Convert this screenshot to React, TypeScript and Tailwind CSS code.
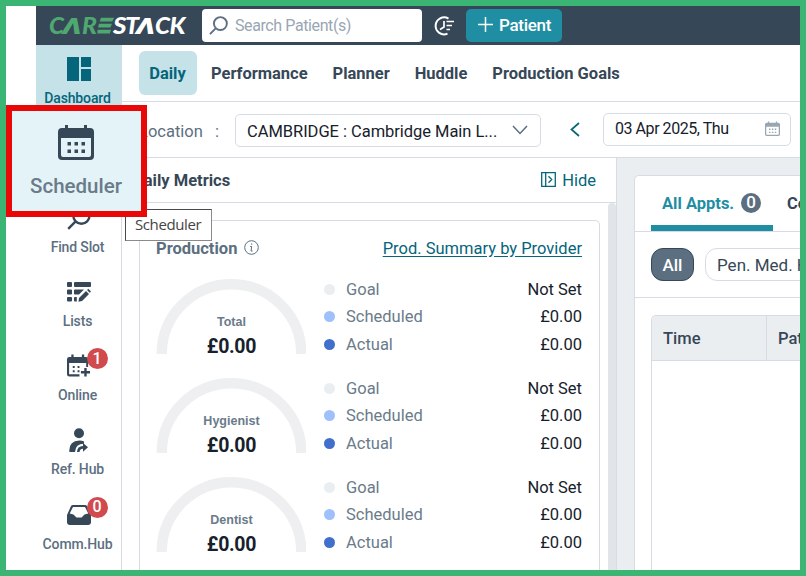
import React from 'react';
import { clsx } from 'clsx';

const TABS = ['Performance', 'Planner', 'Huddle', 'Production Goals'];

const GAUGES = ['Total', 'Hygienist', 'Dentist'];

const LEGEND = [
  { label: 'Goal', value: 'Not Set', dot: 'bg-[#eaeef1]', row: 'h-[27px]' },
  { label: 'Scheduled', value: '£0.00', dot: 'bg-[#a0c0fc]', row: 'h-[27px]' },
  { label: 'Actual', value: '£0.00', dot: 'bg-[#4070cc]', row: 'h-[29px]' },
];

const Logo = () => (
  <svg width="144" height="36" viewBox="-3 -9 144 36" className="shrink-0" fontFamily="Lato, sans-serif" fontWeight="900" fontStyle="italic" fontSize="22">
    <g fill="#4fa870">
      <text x="0" y="16.500" textLength="15" lengthAdjust="spacingAndGlyphs">C</text>
      <text x="13.500" y="16.500" fontFamily="Roboto, sans-serif" textLength="19" lengthAdjust="spacingAndGlyphs">Λ</text>
      <text x="33" y="16.500" textLength="15" lengthAdjust="spacingAndGlyphs">R</text>
      <path d="M52 .8h13.200l-2 3.800H50.600zM50 6.800h13l-1.600 3.600H49zM48.500 12.800h13.500l-1.200 3.700H48.300z" />
    </g>
    <g fill="#ffffff">
      <text x="64" y="16.500" textLength="13.500" lengthAdjust="spacingAndGlyphs">S</text>
      <text x="76" y="16.500" textLength="14" lengthAdjust="spacingAndGlyphs">T</text>
      <text x="87" y="16.500" fontFamily="Roboto, sans-serif" textLength="19" lengthAdjust="spacingAndGlyphs">Λ</text>
      <text x="106" y="16.500" textLength="15" lengthAdjust="spacingAndGlyphs">C</text>
      <text x="120.500" y="16.500" textLength="16" lengthAdjust="spacingAndGlyphs">K</text>
    </g>
  </svg>
);

const SearchIcon = ({ size, className }: { size: number; className?: string }) => (
  <svg width={size} height={size} viewBox="0 0 20 20" fill="none" stroke="currentColor" strokeWidth="2" className={className}>
    <circle cx="12" cy="8" r="6.8" />
    <path d="M7 13l-6 6" />
  </svg>
);

const CalendarIcon = ({ size, className }: { size: number; className?: string }) => (
  <svg width={size} height={size} viewBox="0 0 36 36" className={className}>
    <path
      fill="currentColor"
      fillRule="evenodd"
      d="M7 1h3v3h16V1h3v3h3q4 0 4 4v24q0 4-4 4H4q-4 0-4-4V8q0-4 4-4h3zM3 14v17q0 2 2 2h26q2 0 2-2V14z"
    />
    <path fill="currentColor" d="M9.500 18H13v3.500H9.500zm7 0H20v3.500h-3.500zm7 0H27v3.500h-3.500zM9.500 25.500H13V29H9.500zm7 0H20V29h-3.500zm7 0H27V29h-3.500z" />
  </svg>
);

const DashboardIcon = () => (
  <svg width="24" height="24" viewBox="0 0 24 24" fill="#04657b">
    <path d="M0 0h12v24H0zM14 0h10v10H14zM14 12h10v12H14z" />
  </svg>
);

const ListsIcon = () => (
  <svg width="24" height="20" viewBox="0 0 24 20" fill="currentColor">
    <path d="M1 0h3q1 0 1 1v3q0 1-1 1H1Q0 5 0 4V1q0-1 1-1zM8 0h15q1 0 1 1v3q0 1-1 1H8Q7 5 7 4V1q0-1 1-1zM1 7.500h3q1 0 1 1v3q0 1-1 1H1q-1 0-1-1v-3q0-1 1-1zM8 7.500h9l-5 5H8q-1 0-1-1v-3q0-1 1-1zM1 15h3q1 0 1 1v2.500q0 1-1 1H1q-1 0-1-1V16q0-1 1-1zM8 15h1.800v4.500H8q-1 0-1-1V16q0-1 1-1z" />
    <path d="M12 16l7-7 3 3-7 7-3.500.8zM20 8l1.300-1.200L24 9.500l-1.300 1.300z" />
  </svg>
);

const OnlineIcon = () => (
  <svg width="25" height="24" viewBox="0 0 25 24" fill="currentColor">
    <path d="M4.500 0h2.400v2.500h8.600V0h2.400v2.500H20q2 0 2 2V13h-2V9H2.200v11.500H13V23H2.500Q0 23 0 20.500V5q0-2.500 2.500-2.500h2z" />
    <path d="M6 12h2v2H6zM11 12h2v2h-2zM6 16.500h2v2H6zM11 16.500h2v2h-2zM18 14h2.500v3.200H24v2.500h-3.500V23H18v-3.300h-3.500v-2.500H18z" />
  </svg>
);

const ReferralIcon = () => (
  <svg width="20" height="25" viewBox="0 0 20 25" fill="currentColor">
    <circle cx="10" cy="5.300" r="5" />
    <path d="M1 24q-.8 0-.8-1Q.2 12.500 10.500 12.500q2.500 0 4.500 1v2.300q-8.500 0-9 8.200z" />
    <path d="M8 24q.2-6 6-6.100V15l5 4.300-5 4.400v-3q-3 0-3.500 3.300z" />
  </svg>
);

const InboxIcon = () => (
  <svg width="24" height="20" viewBox="0 0 24 20">
    <path
      fill="currentColor"
      fillRule="evenodd"
      d="M6 0h12q1.500 0 2.100 1.300L24 10v7q0 3-3 3H3q-3 0-3-3v-7l3.900-8.700Q4.500 0 6 0zM6 2L2.700 8.500l3.800 1 3 3h5l3-3 3.800-1L18 2z"
    />
  </svg>
);

const NAV_ITEMS = [
  { label: 'Dashboard', icon: <DashboardIcon />, active: true },
  { label: '', icon: null },
  { label: 'Find Slot', icon: <SearchIcon size={24} /> },
  { label: 'Lists', icon: <ListsIcon /> },
  { label: 'Online', icon: <OnlineIcon />, badge: '1' },
  { label: 'Ref. Hub', icon: <ReferralIcon /> },
  { label: 'Comm.Hub', icon: <InboxIcon />, badge: '0' },
];

const Header = () => (
  <header className="flex h-[39px] shrink-0 items-center bg-[#364757] pl-[10px]">
    <Logo />
    <div className="ml-3 flex h-[33px] w-[220px] items-center rounded bg-white pl-[7px] text-[#5c6f80]">
      <SearchIcon size={19} />
      <span className="ml-[7px] text-[16px] tracking-[-0.4px] text-[#98a6b3]">Search Patient(s)</span>
    </div>
    <svg width="20" height="20" viewBox="0 0 20 20" fill="none" stroke="#fff" strokeWidth="2" className="ml-3">
      <path d="M14.500 2.600A8.500 8.500 0 1 0 13.500 17.700" />
      <path d="M10 5v6l-4 2.500" strokeWidth="1.700" />
      <path d="M12.500 5.500H20M12.500 9.500H18M12.500 13.500H16" strokeWidth="1.700" />
    </svg>
    <button className="ml-3 flex h-[33px] w-[96px] items-center rounded-[5px] bg-[#1f8ea3] pl-3 text-white">
      <svg width="15" height="15" viewBox="0 0 15 15" stroke="currentColor" strokeWidth="1.500" className="-mt-[2px]">
        <path d="M7.500 0v15M0 7.500h15" />
      </svg>
      <span className="ml-[6px] text-[17px] font-medium tracking-[-0.3px]">Patient</span>
    </button>
  </header>
);

const Sidebar = () => (
  <nav className="flex w-[86px] shrink-0 flex-col border-r border-[#d5dce5] text-[#364757]">
    {NAV_ITEMS.map((item, i) => (
      <div
        key={i}
        className={clsx('flex h-[74.3px] shrink-0 flex-col items-center', item.active && 'bg-[#c5e2e8]')}
      >
        <div className="relative flex h-[48px] w-6 items-center justify-center">
          {item.icon}
          {item.badge && (
            <span className="absolute top-[6px] left-[20px] flex size-[21px] items-center justify-center rounded-full bg-[#d14b4e] text-[16px] font-medium text-white">
              {item.badge}
            </span>
          )}
        </div>
        <span
          className={clsx(
            'mr-[2px] text-[14px] leading-[10px] font-medium tracking-[-0.15px] whitespace-nowrap',
            item.active ? 'text-[#04657b]' : 'text-[#5c6f80]'
          )}
        >
          {item.label}
        </span>
      </div>
    ))}
  </nav>
);

const Gauge = ({ label }: { label: string }) => (
  <div className="relative h-[75px] w-[150px]">
    <svg width="150" height="75" viewBox="0 0 150 75" fill="none">
      <path d="M5.700 75a69.800 69.800 0 0 1 139.600 0" stroke="#edeff1" strokeWidth="10.400" />
    </svg>
    <div className="absolute inset-x-0 top-[35px] pl-px text-center">
      <div className="font-['Liberation_Sans',sans-serif] text-[12.5px] leading-4 font-bold text-[#6a7b8a]">{label}</div>
      <div className="mt-[5px] text-[19.5px] leading-6 font-bold tracking-[-0.3px] text-[#16212b]">£0.00</div>
    </div>
  </div>
);

const MetricsPanel = () => (
  <div className="flex w-[495px] shrink-0 flex-col border-r border-[#d5dce5]">
    <div className="flex h-[45px] shrink-0 items-center justify-between border-b border-[#d5dce5] pt-[2px] pr-5 pl-[11px]">
      <h2 className="text-[16.5px] font-bold text-[#364757]">Daily Metrics</h2>
      <div className="flex items-center gap-[6px] text-[16.5px] text-[#04657b]">
        <svg width="15" height="15" viewBox="0 0 15 15" fill="none" stroke="currentColor" strokeWidth="1.300" className="-mt-[3px]">
          <path d="M.7.700h13.600v13.600H.7zM4.700.700v13.600M7.500 4.300l3.200 3.200-3.200 3.200" />
        </svg>
        Hide
      </div>
    </div>
    <div className="flex min-h-0 flex-1 justify-between pl-[17px]">
      <div className="mt-[17px] w-[461px] rounded-t-[5px] border border-b-0 border-[#d5dce5] pr-[17px] pl-4">
        <div className="mt-[15px] flex h-[26px] items-center">
          <h3 className="text-[16.5px] font-bold text-[#5c6f80]">Production</h3>
          <svg width="15" height="15" viewBox="0 0 15 15" fill="none" stroke="#5c6f80" className="-mt-[3px] ml-[7px]">
            <circle cx="7.500" cy="7.500" r="6.800" />
            <path d="M6.200 6.500h1.500L7 11h1.500M7.700 3.400v1.400" />
          </svg>
          <span className="ml-auto text-[16.5px] text-[#04657b] underline underline-offset-2">Prod. Summary by Provider</span>
        </div>
        <div className="mt-[14px] flex flex-col">
          {GAUGES.map((label) => (
            <div key={label} className="flex h-[99px] shrink-0">
              <div className="mt-[3px]">
                <Gauge label={label} />
              </div>
              <div className="ml-[18px] flex-1">
                {LEGEND.map((row) => (
                  <div key={row.label} className={clsx('flex items-center text-[16.5px]', row.row)}>
                    <span className={clsx('size-[11px] rounded-full', row.dot)} />
                    <span className="ml-[11px] leading-5 text-[#6a7b8a]">{row.label}</span>
                    <span className="ml-auto leading-5 text-[#16212b]">{row.value}</span>
                  </div>
                ))}
              </div>
            </div>
          ))}
        </div>
      </div>
      <div className="w-2 rounded-t bg-[#e1e5e8]" />
    </div>
  </div>
);

const AppointmentsPanel = () => (
  <div className="flex flex-1 bg-[#eaeef1] pt-[17px] pl-[17px]">
    <div className="flex w-[300px] shrink-0 flex-col rounded-tl-[5px] border-t border-l border-[#d5dce5] bg-white">
      <div className="flex h-[56px] shrink-0 border-b border-[#d5dce5] pl-4">
        <div className="flex w-[122px] shrink-0 items-center border-b-[6px] border-[#1f8ea3] pt-[6px] pl-[11px]">
          <span className="pt-[2px] text-[16.5px] font-bold text-[#1f8ea3]">All Appts.</span>
          <span className="-mt-px ml-[7px] flex size-5 items-center justify-center rounded-full bg-[#5c6f80] text-[17px] font-medium text-white">0</span>
        </div>
        <div className="flex items-center pt-px pl-[14px] text-[16.5px] font-bold whitespace-nowrap text-[#364757]">Confirmed</div>
      </div>
      <div className="flex h-[66px] shrink-0 items-center gap-[11px] border-b border-[#d5dce5] pl-4 text-[17px] whitespace-nowrap">
        <span className="flex h-[33px] w-[43px] items-center justify-center rounded-[12px] border border-[#364757] bg-[#5c6f80] pt-[2px] font-medium text-white">
          All
        </span>
        <span className="flex h-[33px] items-center rounded-[12px] border border-[#d5dce5] px-[11px] pt-[2px] text-[#364757]">
          Pen. Med. History
        </span>
      </div>
      <div className="mt-[17px] ml-4 flex-1 rounded-tl-[5px] border-t border-l border-[#d5dce5]">
        <div className="flex h-[45px] items-center rounded-tl-[4px] border-b border-[#d5dce5] bg-[#eaeef1] text-[16.5px] font-medium text-[#364757]">
          <div className="flex h-full w-[115px] items-center border-r border-[#d5dce5] pt-[3px] pl-[11px]">Time</div>
          <div className="pt-[3px] pl-[11px]">Patient</div>
        </div>
      </div>
    </div>
  </div>
);

export default function App() {
  return (
    <div className="relative h-[576px] w-[806px] overflow-hidden border-6 border-[#3bb573] bg-white pl-[30px] font-[Roboto,sans-serif]">
      <div className="flex h-full flex-col overflow-hidden">
        <Header />
        <div className="flex min-h-0 flex-1">
          <Sidebar />
          <main className="flex min-w-0 flex-1 flex-col overflow-hidden">
            {/* Page tabs */}
            <div className="flex h-[57px] shrink-0 items-center border-b border-[#d5dce5] pl-[17px] text-[16.5px] font-bold text-[#364757]">
              <div className="flex h-[44px] w-[58px] items-center justify-center rounded-md bg-[#c5e2e8] pt-[2px] pr-px text-[#04657b]">Daily</div>
              <div className="ml-[14px] flex gap-[25px] pt-[2px] whitespace-nowrap">
                {TABS.map((tab) => (
                  <span key={tab} className="tracking-[-0.02px]">{tab}</span>
                ))}
              </div>
            </div>

            {/* Filters */}
            <div className="flex h-[56px] shrink-0 items-center border-b border-[#d5dce5] pl-[17px] text-[16.5px]">
              <span className="w-[76px] pt-[5px] text-[#5c6f80]">Location</span>
              <span className="w-[20px] pt-[5px] text-[#5c6f80]">:</span>
              <div className="mt-[2px] flex h-[33px] w-[306px] items-center justify-between rounded-[5px] border border-[#d5dce5] pr-[12px] pl-[11px] text-[#16212b]">
                <span className="pt-[3px] leading-5 tracking-[-0.04px]">CAMBRIDGE : Cambridge Main L...</span>
                <svg width="16" height="10" viewBox="0 0 16 10" fill="none" stroke="#5c6f80" strokeWidth="1.500" className="-mt-[2px]">
                  <path d="M1 1l7 7.500L15 1" />
                </svg>
              </div>
              <svg width="10" height="15" viewBox="0 0 10 15" fill="none" stroke="#04657b" strokeWidth="1.700" className="mr-[23px] ml-[29px]">
                <path d="M9 1L1.500 7.500 9 14" />
              </svg>
              <div className="flex h-[33px] w-[188px] items-center justify-between rounded-[5px] border border-[#d5dce5] pr-[10px] pl-[11px] text-[16px] text-[#16212b]">
                <span className="pb-px tracking-[-0.45px]">03 Apr 2025, Thu</span>
                <CalendarIcon size={15} className="-mt-[2px] text-[#98a6b3]" />
              </div>
            </div>

            <div className="flex min-h-0 flex-1">
              <MetricsPanel />
              <AppointmentsPanel />
            </div>
          </main>
        </div>
      </div>

      {/* Hover tooltip */}
      <div className="absolute top-[203px] left-[119px] flex h-[32px] w-[87px] items-center border border-[#4a4a4a] border-r-[#8a8a8a] border-b-[#8a8a8a] bg-white pb-[2px] pl-[9px] font-['Open_Sans',sans-serif] text-[15px] tracking-[-0.4px] text-[#444]">
        Scheduler
      </div>

      {/* Highlighted menu item */}
      <div className="absolute top-[99px] left-0 flex h-[112px] w-[141px] flex-col items-center border-6 border-[#e80808] bg-[#e4f3f7] pt-[13px] pr-px">
        <CalendarIcon size={36} className="text-[#364757]" />
        <span className="mt-[14px] text-[20.5px] leading-6 font-medium text-[#6a7b8a]">Scheduler</span>
      </div>
    </div>
  );
}
